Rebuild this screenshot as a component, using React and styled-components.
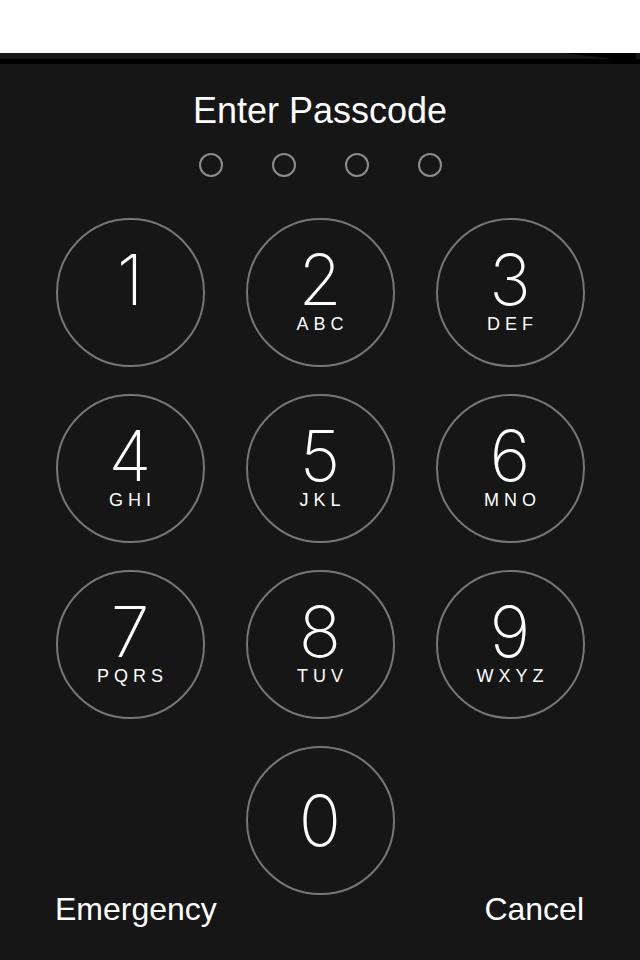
import styled, { createGlobalStyle } from 'styled-components'

// Page reset
const GlobalStyle = createGlobalStyle`
    html, body {
        margin: 0;
        padding: 0;
        background-color: #161616;
    }
    * {
        box-sizing: border-box;
    }
`

const keys = [
    { digit: '1', letters: '' },
    { digit: '2', letters: 'ABC' },
    { digit: '3', letters: 'DEF' },
    { digit: '4', letters: 'GHI' },
    { digit: '5', letters: 'JKL' },
    { digit: '6', letters: 'MNO' },
    { digit: '7', letters: 'PQRS' },
    { digit: '8', letters: 'TUV' },
    { digit: '9', letters: 'WXYZ' },
]

const Screen = styled.div`
    width: 640px;
    height: 960px;
    overflow: hidden;
    background-color: #161616;
    font-family: 'Liberation Sans', Arial, sans-serif;
    color: #ffffff;
`
const TopBar = styled.div`
    height: 53px;
    background-color: #ffffff;
`
const Edge = styled.div`
    height: 6px;
    background-color: #161616;
    svg {
        display: block;
    }
`
const EdgeLine = styled.div`
    height: 5px;
    background-color: #000000;
`
const Main = styled.main`
    display: flex;
    flex-direction: column;
    align-items: center;
    padding-top: 27px;
`
const Title = styled.h1`
    margin: 0;
    font-size: 36px;
    line-height: 40px;
    font-weight: 400;
`
const Dots = styled.div`
    display: flex;
    gap: 49px;
    margin-top: 22px;
`
const Dot = styled.span`
    width: 24px;
    height: 24px;
    border-radius: 50%;
    border: 2px solid #8c8c8c;
`
const Pad = styled.div`
    display: grid;
    grid-template-columns: repeat(3, 149px);
    column-gap: 41px;
    row-gap: 27px;
    justify-content: center;
    margin-top: 41px;
`
const Key = styled.button`
    width: 149px;
    height: 149px;
    border-radius: 50%;
    border: 2px solid #767676;
    background: transparent;
    color: #ffffff;
    padding: ${(p) => (p.$centered ? '0' : '25px 0 0')};
    display: flex;
    flex-direction: column;
    align-items: center;
    justify-content: ${(p) => (p.$centered ? 'center' : 'flex-start')};
    grid-column: ${(p) => p.$column || 'auto'};
    cursor: pointer;
`
const Digit = styled.span`
    font-family: 'Inter', 'Liberation Sans', sans-serif;
    font-weight: 200;
    font-size: 70px;
    line-height: 70px;
`
const Letters = styled.span`
    font-family: 'Liberation Sans', Arial, sans-serif;
    font-size: 18px;
    line-height: 18px;
    letter-spacing: 5px;
    padding-left: 5px;
    min-height: 18px;
`
const Footer = styled.div`
    display: flex;
    justify-content: space-between;
    padding: 0 56px 0 55px;
    margin-top: -2px;
`
const FooterButton = styled.button`
    background: transparent;
    border: none;
    padding: 0;
    color: #ffffff;
    font-family: 'Liberation Sans', Arial, sans-serif;
    font-size: 32px;
    line-height: 32px;
    cursor: pointer;
`

function App() {
    return (
        <Screen>
            <GlobalStyle />
            <TopBar />
            <Edge>
                <svg width="640" height="6" viewBox="0 0 640 6">
                    <polygon points="565,0 636,0 636,6 613,6" fill="#000000" />
                </svg>
            </Edge>
            <EdgeLine />
            <Main>
                <Title>Enter Passcode</Title>
                <Dots>
                    <Dot />
                    <Dot />
                    <Dot />
                    <Dot />
                </Dots>
                <Pad>
                    {keys.map((k) => (
                        <Key key={k.digit}>
                            <Digit>{k.digit}</Digit>
                            <Letters>{k.letters}</Letters>
                        </Key>
                    ))}
                    <Key $column="2" $centered>
                        <Digit>0</Digit>
                    </Key>
                </Pad>
            </Main>
            <Footer>
                <FooterButton>Emergency</FooterButton>
                <FooterButton>Cancel</FooterButton>
            </Footer>
        </Screen>
    )
}
export default App
